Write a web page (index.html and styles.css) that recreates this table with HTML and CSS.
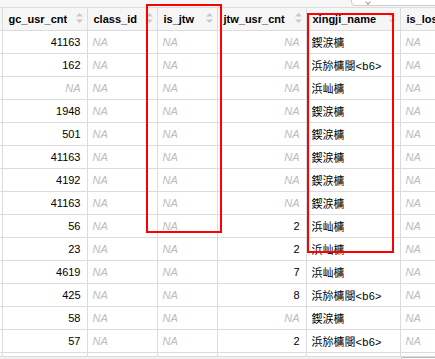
FILE: index.html
```html
<!DOCTYPE html>
<html>
<head>
<meta charset="utf-8">
<link rel="stylesheet" href="styles.css">
</head>
<body>
<div class="frame">
  <div class="topbar"><div class="select"><span class="caret"></span></div></div>
  <table class="grid">
    <colgroup>
      <col class="w0"><col class="w1"><col class="w2"><col class="w3"><col class="w4"><col class="w5"><col class="w6">
    </colgroup>
    <thead>
      <tr>
        <th></th>
        <th><div class="hc"><span>gc_usr_cnt</span><svg class="sort" viewBox="0 0 7 12"><path d="M3.5 1L7 4.5H0z"/><path d="M0 7.5H7L3.5 11z"/></svg></div></th>
        <th><div class="hc"><span>class_id</span><svg class="sort" viewBox="0 0 7 12"><path d="M3.5 1L7 4.5H0z"/><path d="M0 7.5H7L3.5 11z"/></svg></div></th>
        <th><div class="hc"><span>is_jtw</span><svg class="sort" viewBox="0 0 7 12"><path d="M3.5 1L7 4.5H0z"/><path d="M0 7.5H7L3.5 11z"/></svg></div></th>
        <th><div class="hc"><span>jtw_usr_cnt</span><svg class="sort" viewBox="0 0 7 12"><path d="M3.5 1L7 4.5H0z"/><path d="M0 7.5H7L3.5 11z"/></svg></div></th>
        <th><div class="hc"><span>xingji_name</span><svg class="sort" viewBox="0 0 7 12"><path d="M3.5 1L7 4.5H0z"/><path d="M0 7.5H7L3.5 11z"/></svg></div></th>
        <th><div class="hc"><span>is_lost</span><svg class="sort" viewBox="0 0 7 12"><path d="M3.5 1L7 4.5H0z"/><path d="M0 7.5H7L3.5 11z"/></svg></div></th>
      </tr>
    </thead>
    <tbody>
      <tr><td></td><td class="num">41163</td><td class="na">NA</td><td class="na">NA</td><td class="num na">NA</td><td class="txt">鍥涙槦</td><td class="na">NA</td></tr>
      <tr><td></td><td class="num">162</td><td class="na">NA</td><td class="na">NA</td><td class="num na">NA</td><td class="txt">浜旀槦閿<span class="esc">&lt;b6&gt;</span></td><td class="na">NA</td></tr>
      <tr><td></td><td class="num na">NA</td><td class="na">NA</td><td class="na">NA</td><td class="num na">NA</td><td class="txt">浜屾槦</td><td class="na">NA</td></tr>
      <tr><td></td><td class="num">1948</td><td class="na">NA</td><td class="na">NA</td><td class="num na">NA</td><td class="txt">鍥涙槦</td><td class="na">NA</td></tr>
      <tr><td></td><td class="num">501</td><td class="na">NA</td><td class="na">NA</td><td class="num na">NA</td><td class="txt">鍥涙槦</td><td class="na">NA</td></tr>
      <tr><td></td><td class="num">41163</td><td class="na">NA</td><td class="na">NA</td><td class="num na">NA</td><td class="txt">鍥涙槦</td><td class="na">NA</td></tr>
      <tr><td></td><td class="num">4192</td><td class="na">NA</td><td class="na">NA</td><td class="num na">NA</td><td class="txt">鍥涙槦</td><td class="na">NA</td></tr>
      <tr><td></td><td class="num">41163</td><td class="na">NA</td><td class="na">NA</td><td class="num na">NA</td><td class="txt">鍥涙槦</td><td class="na">NA</td></tr>
      <tr><td></td><td class="num">56</td><td class="na">NA</td><td class="na">NA</td><td class="num">2</td><td class="txt">浜屾槦</td><td class="na">NA</td></tr>
      <tr><td></td><td class="num">23</td><td class="na">NA</td><td class="na">NA</td><td class="num">2</td><td class="txt">浜屾槦</td><td class="na">NA</td></tr>
      <tr><td></td><td class="num">4619</td><td class="na">NA</td><td class="na">NA</td><td class="num">7</td><td class="txt">浜屾槦</td><td class="na">NA</td></tr>
      <tr><td></td><td class="num">425</td><td class="na">NA</td><td class="na">NA</td><td class="num">8</td><td class="txt">浜旀槦閿<span class="esc">&lt;b6&gt;</span></td><td class="na">NA</td></tr>
      <tr><td></td><td class="num">58</td><td class="na">NA</td><td class="na">NA</td><td class="num na">NA</td><td class="txt">鍥涙槦</td><td class="na">NA</td></tr>
      <tr><td></td><td class="num">57</td><td class="na">NA</td><td class="na">NA</td><td class="num">2</td><td class="txt">浜旀槦閿<span class="esc">&lt;b6&gt;</span></td><td class="na">NA</td></tr>
      <tr class="stub"><td></td><td></td><td></td><td></td><td></td><td></td><td></td></tr>
    </tbody>
  </table>
  <div class="hscroll"><div class="thumb"></div></div>
  <div class="mark mark1"></div>
  <div class="mark mark2"></div>
</div>
</body>
</html>
```

FILE: styles.css
```css
html, body {
  margin: 0;
  padding: 0;
  background: #ffffff;
}
.frame {
  position: relative;
  width: 435px;
  height: 359px;
  overflow: hidden;
  font-family: "Liberation Sans", Arial, "Noto Sans CJK SC", sans-serif;
  font-size: 11px;
  color: #000;
}
.topbar {
  height: 7px;
  background: #f6f6f6;
  border-bottom: 1px solid #dddddd;
  display: flex;
  justify-content: flex-end;
}
.select {
  width: 90px;
  height: 10px;
  margin-top: -6px;
  margin-right: -8px;
  background: #fff;
  border: 1px solid #cfcfcf;
  border-radius: 4px;
  position: relative;
}
.caret {
  position: absolute;
  left: 14px;
  top: 5px;
  width: 3px;
  height: 3px;
  border-right: 1px solid #999;
  border-bottom: 1px solid #999;
  transform: rotate(45deg);
}
.grid {
  border-collapse: collapse;
  table-layout: fixed;
  width: 460px;
}
.w0 { width: 2px; }
.w1 { width: 85px; }
.w2 { width: 70px; }
.w3 { width: 60px; }
.w4 { width: 89px; }
.w5 { width: 94px; }
.w6 { width: 60px; }
.grid th, .grid td {
  border-right: 1px solid #dcdcdc;
  border-bottom: 1px solid #dcdcdc;
  padding: 0 6px 0 5px;
  white-space: nowrap;
  overflow: hidden;
}
.grid th:first-child, .grid td:first-child {
  padding: 0;
}
.grid th {
  height: 22px;
  background: #f6f6f6;
  font-weight: bold;
  text-align: left;
  padding-left: 6px;
  padding-right: 4px;
}
.hc {
  display: flex;
  align-items: center;
  justify-content: space-between;
}
.sort {
  width: 7px;
  height: 12px;
  fill: #c8c8c8;
  flex: none;
  margin-top: -3px;
}
.grid td {
  height: 22px;
}
.num { text-align: right; }
.na {
  color: #bcbcbc;
  font-style: italic;
}
.txt {
  font-family: "Liberation Sans", "Noto Sans CJK SC", sans-serif;
}
.esc { letter-spacing: 0.3px; }
.stub td { height: 3px; }
.hscroll {
  height: 6px;
  background: #f0f0f0;
  display: flex;
  justify-content: flex-end;
}
.thumb {
  width: 40px;
  margin-right: -8px;
  border: 1px solid #b8b8b8;
  border-bottom: none;
  border-radius: 2px 2px 0 0;
  background: #fafafa;
}
.mark {
  position: absolute;
  border: 2px solid #ff0000;
  box-sizing: border-box;
}
.mark1 { left: 146px; top: 4px; width: 76px; height: 229px; }
.mark2 { left: 307px; top: 13px; width: 87px; height: 240px; }
```
